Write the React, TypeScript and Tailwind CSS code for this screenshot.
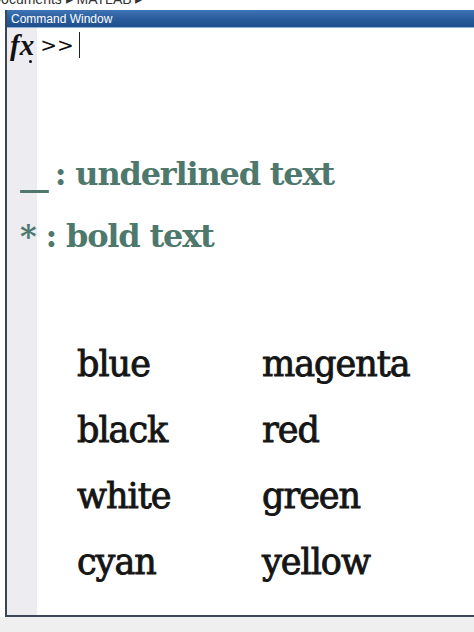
import React from "react";

const colors: [string, string][] = [
  ["blue", "magenta"],
  ["black", "red"],
  ["white", "green"],
  ["cyan", "yellow"],
];

export default function App() {
  return (
    <div className="w-[474px] h-[632px] bg-white flex flex-col overflow-hidden font-['Liberation_Sans',sans-serif]">
      {/* breadcrumb strip, cut off at the top */}
      <div className="h-[10px] relative overflow-hidden bg-white">
        <div className="absolute -top-[8px] left-[-9px] text-[14px] text-[#333] whitespace-nowrap leading-none">
          Documents ▸ MATLAB ▸
        </div>
      </div>

      {/* command window */}
      <div className="flex-1 flex flex-col ml-[5px] border-l-2 border-b-2 border-[#3a4656]">
        <div className="h-[18px] bg-[linear-gradient(to_bottom,#3f74b6,#2a5d9e_50%,#1f4f8c)] border-b border-[#8fb0d8] flex items-center pl-[4px]">
          <span className="text-white text-[12px] leading-none">Command Window</span>
        </div>

        <div className="flex-1 bg-[linear-gradient(to_right,#ececf1_30px,#ffffff_30px)] flex flex-col">
          {/* prompt */}
          <div className="flex items-center h-[34px] pl-[3px]">
            <span className="relative font-['Liberation_Serif',serif] italic font-bold text-[29px] leading-none text-[#111]">
              fx
              <span className="absolute left-[19px] bottom-[-3px] w-[3px] h-[3px] rounded-full bg-[#111]" />
            </span>
            <span className="ml-[6px] text-[20px] leading-none text-[#111] font-['DejaVu_Sans',sans-serif]">&gt;&gt;</span>
            <span className="ml-[5px] w-px h-[26px] bg-[#222]" />
          </div>

          {/* legend */}
          <div className="mt-[84px] pl-[13px] flex flex-col gap-[6px] font-['DejaVu_Serif',serif] font-bold text-[#4e786c] text-[32px] leading-[56px] tracking-[-1.2px]">
            <div>
              <span className="inline-block origin-left scale-x-[1.8] mr-[20px]">_</span>: underlined text
            </div>
            <div>* : bold text</div>
          </div>

          {/* color names */}
          <div className="mt-[78px] pl-[70px] grid grid-cols-[185px_1fr] gap-y-[22px] font-['DejaVu_Serif',serif] text-[35px] leading-[44px] text-[#151515] tracking-[-1px] [-webkit-text-stroke:0.9px_#151515]">
            {colors.map(([a, b]) => (
              <React.Fragment key={a}>
                <div>{a}</div>
                <div>{b}</div>
              </React.Fragment>
            ))}
          </div>
        </div>
      </div>

      <div className="h-[15px] bg-[#efeff0]" />
    </div>
  );
}
